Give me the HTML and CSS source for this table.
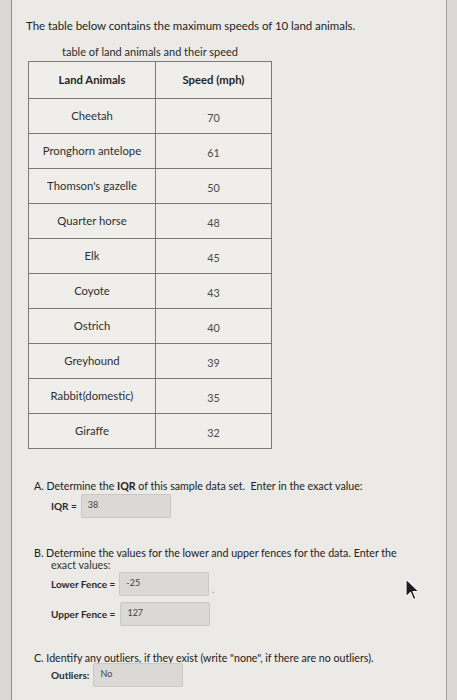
FILE: index.html
```html
<!DOCTYPE html>
<html>
<head>
<meta charset="utf-8">
<link rel="stylesheet" href="styles.css">
</head>
<body>
<div class="panel">
  <p class="intro">The table below contains the maximum speeds of 10 land animals.</p>
  <div class="tablewrap">
    <div class="caption">table of land animals and their speed</div>
    <table class="speeds">
      <tr class="head"><th>Land Animals</th><th>Speed (mph)</th></tr>
      <tr><td>Cheetah</td><td class="num">70</td></tr>
      <tr><td>Pronghorn antelope</td><td class="num">61</td></tr>
      <tr><td>Thomson's gazelle</td><td class="num">50</td></tr>
      <tr><td>Quarter horse</td><td class="num">48</td></tr>
      <tr><td>Elk</td><td class="num">45</td></tr>
      <tr><td>Coyote</td><td class="num">43</td></tr>
      <tr><td>Ostrich</td><td class="num">40</td></tr>
      <tr><td>Greyhound</td><td class="num">39</td></tr>
      <tr><td>Rabbit(domestic)</td><td class="num">35</td></tr>
      <tr><td>Giraffe</td><td class="num">32</td></tr>
    </table>
  </div>

  <div class="question qa">
    <p class="qline">A. Determine the <b>IQR</b> of this sample data set.&nbsp; Enter in the exact value:</p>
    <div class="field"><span class="label">IQR =</span><span class="box">38</span></div>
  </div>

  <div class="question qb">
    <p class="qline">B. Determine the values for the lower and upper fences for the data. Enter the</p>
    <p class="cont">exact values:</p>
    <div class="field f-lower"><span class="label">Lower Fence =</span><span class="box">-25</span><span class="dot">.</span></div>
    <div class="field f-upper"><span class="label">Upper Fence =</span><span class="box">127</span></div>
  </div>

  <div class="question qc">
    <p class="qline">C. Identify any outliers, if they exist (write "none", if there are no outliers).</p>
    <div class="field"><span class="label">Outliers:</span><span class="box">No</span></div>
  </div>

  <svg class="cursor" width="16" height="24" viewBox="0 0 16 24">
    <path d="M2 1 L2 19 L6.5 14.5 L9.5 21.5 L12 20.5 L9 13.5 L15 13.5 Z" fill="#1c1c22" stroke="#f4f4f4" stroke-width="1.2" stroke-linejoin="round"/>
  </svg>
</div>
</body>
</html>
```

FILE: styles.css
```css
html, body {
  margin: 0;
  padding: 0;
}
body {
  background: #d9d8d4;
  font-family: Lato, "Open Sans", sans-serif;
  color: #262626;
  width: 457px;
  height: 700px;
  overflow: hidden;
}
.panel {
  position: relative;
  margin-left: 11px;
  width: 436px;
  height: 700px;
  box-sizing: border-box;
  border-left: 1.5px solid #8e8e8c;
  border-right: 1.5px solid #a2a29f;
  background: #ebeae6;
  padding: 19px 0 0 14px;
}
p { margin: 0; }
.intro {
  font-size: 11.5px;
  line-height: 14px;
  color: #1e1e1e;
  letter-spacing: -0.05px;
}
.tablewrap {
  margin: 12px 0 0 2px;
  width: 244px;
}
.caption {
  text-align: center;
  font-size: 11px;
  line-height: 14px;
  color: #2a2a2a;
  margin-bottom: 2px;
}
.speeds {
  border-collapse: collapse;
  width: 244px;
  background: #efeeeb;
}
.speeds th, .speeds td {
  border: 1.5px solid #7a7a78;
  text-align: center;
  padding: 0 0 2px;
  font-size: 11.3px;
  color: #2e2e2e;
}
.speeds th {
  font-weight: 700;
  height: 34px;
  color: #252525;
}
.speeds th:first-child, .speeds td:first-child { width: 126px; }
.speeds td { height: 32px; }
.speeds td.num {
  font-size: 10.8px;
  color: #4a4a4a;
  height: 31px;
  padding-top: 3px;
  padding-bottom: 0;
}
.question { margin-left: 8px; }
.qa { margin-top: 31px; }
.qb { margin-top: 29px; }
.qc { margin-top: 26px; }
.qline {
  font-size: 10.65px;
  line-height: 12px;
  color: #222;
}
.qline b { font-weight: 700; }
.cont {
  font-size: 10.65px;
  line-height: 12px;
  padding-left: 17px;
  color: #333;
}
.field {
  display: flex;
  align-items: center;
  padding-left: 17px;
}
.label {
  font-size: 10px;
  font-weight: 700;
  color: #2a2a2a;
  margin-right: 4px;
}
.box {
  display: flex;
  align-items: center;
  box-sizing: border-box;
  width: 90px;
  height: 24px;
  padding: 0 0 4px 6px;
  background: #dad9d5;
  border: 1px solid #c9c8c4;
  border-radius: 2px;
  font-size: 9px;
  color: #444;
}
.qa .field { margin-top: 2px; }
.f-lower { margin-top: 1px; }
.f-upper { margin-top: 6px; }
.f-upper .box { margin-left: 1px; }
.qc .field { margin-top: -1px; }
.dot {
  font-size: 9px;
  color: #888;
  margin-left: 3px;
  padding-top: 10px;
}
.cursor {
  position: absolute;
  left: 392px;
  top: 578px;
}
```
